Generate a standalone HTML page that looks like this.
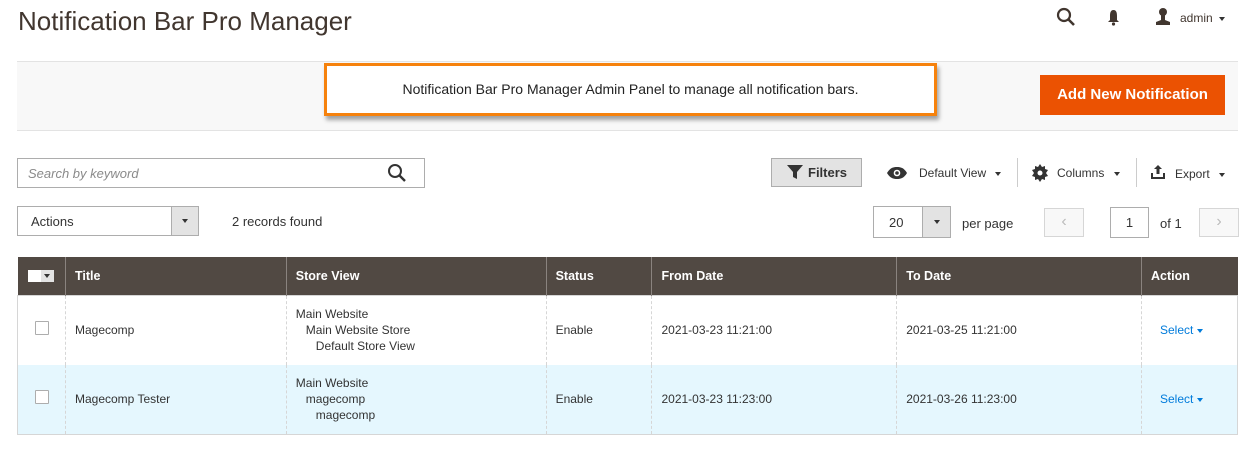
<!DOCTYPE html>
<html><head><style>
*{box-sizing:border-box;margin:0;padding:0}
body{width:1258px;height:464px;background:#fff;font-family:"Liberation Sans",sans-serif;color:#333;position:relative;overflow:hidden;font-size:13px}
.a{position:absolute}
.tri{display:inline-block;width:0;height:0;border-left:3.5px solid transparent;border-right:3.5px solid transparent;border-top:4px solid #333;vertical-align:middle}
table{border-collapse:collapse;position:absolute;left:17px;top:257px;width:1221px;font-size:12px}
th{background:#514943;color:#fff;text-align:left;font-weight:bold;height:38px;padding:0 9px;border-left:1px solid #8a837f;font-size:12.5px}
th:first-child{border-left:none}
td{padding:0 9px;border-left:1px dashed #d6d6d6;vertical-align:middle;line-height:16px}
td:first-child{border-left:none}
tbody tr{height:69px}
tbody tr:first-child{height:70px}
tr.alt td{background:#e5f7fe}
tbody{border:1px solid #d6d6d6}
.cb{width:14px;height:14px;border:1px solid #adadad;background:#fff;display:inline-block;margin-left:8px;border-radius:1px}
.sel{color:#007bdb}
</style></head><body>
<div class="a" style="left:18px;top:6px;font-size:26px;color:#41362f">Notification Bar Pro Manager</div>
<svg class="a" style="left:1056px;top:7px" width="20" height="20" viewBox="0 0 20 20"><circle cx="8" cy="8" r="6" fill="none" stroke="#41362f" stroke-width="2.2"/><path d="M12.5 12.5L18 18" stroke="#41362f" stroke-width="2.6"/></svg>
<svg class="a" style="left:1106px;top:9px" width="15" height="17" viewBox="0 0 15 17"><path d="M7.5 1C4.5 1 4 4 4 7v4L2 13h11l-2-2V7c0-3-.5-6-3.5-6z" fill="#41362f"/><circle cx="7.5" cy="15" r="1.6" fill="#41362f"/></svg>
<svg class="a" style="left:1154px;top:7px" width="18" height="18" viewBox="0 0 18 18"><circle cx="9" cy="5" r="4" fill="#41362f"/><path d="M7 8h4v5l5 2v3H2v-3l5-2z" fill="#41362f"/></svg>
<div class="a" style="left:1180px;top:11px;font-size:12px;color:#41362f">admin <span class="tri" style="margin-left:3px"></span></div>

<div class="a" style="left:17px;top:61px;width:1221px;height:70px;background:#f8f8f8;border-top:1px solid #e3e3e3;border-bottom:1px solid #e3e3e3"></div>
<div class="a" style="left:324px;top:63px;width:613px;height:53px;background:#fff;border:3px solid #f6820d;box-shadow:2px 4px 4px rgba(0,0,0,.35);text-align:center;line-height:47px;font-size:14px;color:#222">Notification Bar Pro Manager Admin Panel to manage all notification bars.</div>
<div class="a" style="left:1040px;top:75px;width:185px;height:40px;background:#eb5202;color:#fff;font-weight:bold;font-size:15px;text-align:center;line-height:40px">Add New Notification</div>

<div class="a" style="left:17px;top:158px;width:408px;height:30px;border:1px solid #adadad;font-style:italic;color:#8a8a8a;font-size:13px;padding:7px 10px">Search by keyword</div>
<svg class="a" style="left:387px;top:163px" width="20" height="20" viewBox="0 0 20 20"><circle cx="8" cy="8" r="6" fill="none" stroke="#333" stroke-width="2"/><path d="M12.5 12.5L18 18" stroke="#333" stroke-width="2.4"/></svg>

<div class="a" style="left:771px;top:158px;width:91px;height:29px;background:#e3e3e3;border:1px solid #adadad;font-weight:bold;font-size:13px;line-height:27px;padding-left:36px;color:#333">Filters</div>
<svg class="a" style="left:787px;top:165px" width="16" height="14" viewBox="0 0 16 14"><path d="M0 0h16L10 7v7L6 12V7z" fill="#333"/></svg>
<svg class="a" style="left:886px;top:166px" width="22" height="14" viewBox="0 0 22 14"><path d="M1 7C4 2 7 1 11 1s7 1 10 6c-3 5-6 6-10 6S4 12 1 7z" fill="#333"/><circle cx="11" cy="7" r="3.3" fill="#fff"/><circle cx="11" cy="7" r="1.8" fill="#333"/></svg>
<div class="a" style="left:919px;top:166px;font-size:12px">Default View <span class="tri" style="margin-left:6px"></span></div>
<div class="a" style="left:1017px;top:158px;width:1px;height:29px;background:#ccc"></div>
<svg class="a" style="left:1031px;top:164px" width="18" height="18" viewBox="0 0 18 18"><path d="M9 0l2 3 3-1 0 3 3 1-2 3 2 3-3 1 0 3-3-1-2 3-2-3-3 1 0-3-3-1 2-3-2-3 3-1 0-3 3 1z" fill="#333"/><circle cx="9" cy="9" r="2.5" fill="#fff"/></svg>
<div class="a" style="left:1057px;top:166px;font-size:12px">Columns <span class="tri" style="margin-left:6px"></span></div>
<div class="a" style="left:1136px;top:158px;width:1px;height:29px;background:#ccc"></div>
<svg class="a" style="left:1150px;top:165px" width="16" height="15" viewBox="0 0 16 15"><path d="M8 0l4 4H9.5v5h-3V4H4z" fill="#333"/><path d="M1 8v6h14V8h-2v4H3V8z" fill="#333"/></svg>
<div class="a" style="left:1175px;top:167px;font-size:12px">Export <span class="tri" style="margin-left:6px"></span></div>

<div class="a" style="left:17px;top:206px;width:182px;height:30px;border:1px solid #adadad;padding:7px 13px;font-size:13px">Actions</div>
<div class="a" style="left:171px;top:206px;width:28px;height:30px;background:#e3e3e3;border:1px solid #adadad;text-align:center;line-height:26px"><span class="tri"></span></div>
<div class="a" style="left:232px;top:214px;font-size:13px">2 records found</div>

<div class="a" style="left:873px;top:206px;width:78px;height:32px;border:1px solid #adadad;padding:8px 15px;font-size:13px">20</div>
<div class="a" style="left:922px;top:206px;width:29px;height:32px;background:#e3e3e3;border:1px solid #adadad;text-align:center;line-height:28px"><span class="tri"></span></div>
<div class="a" style="left:962px;top:216px;font-size:13px">per page</div>
<div class="a" style="left:1044px;top:208px;width:40px;height:29px;background:#f8f8f8;border:1px solid #d6d6d6;text-align:center;line-height:26px;color:#bbb;font-size:16px">‹</div>
<div class="a" style="left:1110px;top:207px;width:39px;height:31px;border:1px solid #adadad;text-align:center;line-height:29px;font-size:13px">1</div>
<div class="a" style="left:1160px;top:216px;font-size:13px">of 1</div>
<div class="a" style="left:1199px;top:208px;width:40px;height:29px;background:#f8f8f8;border:1px solid #d6d6d6;text-align:center;line-height:26px;color:#bbb;font-size:16px">›</div>

<table>
<colgroup><col style="width:48px"><col style="width:221px"><col style="width:260px"><col style="width:106px"><col style="width:245px"><col style="width:245px"><col style="width:96px"></colgroup>
<thead><tr><th style="padding:0 0 0 10px"><span style="display:inline-block;width:13px;height:12px;background:#fff;vertical-align:middle"></span><span style="display:inline-block;width:13px;height:12px;background:#e3e3e3;vertical-align:middle;text-align:center;line-height:10px"><span class="tri" style="border-top-color:#333"></span></span></th><th>Title</th><th>Store View</th><th>Status</th><th>From Date</th><th>To Date</th><th>Action</th></tr></thead>
<tbody>
<tr><td><span class="cb"></span></td><td>Magecomp</td><td>Main Website<br>&nbsp;&nbsp;&nbsp;Main Website Store<br>&nbsp;&nbsp;&nbsp;&nbsp;&nbsp;&nbsp;Default Store View</td><td>Enable</td><td>2021-03-23 11:21:00</td><td>2021-03-25 11:21:00</td><td style="padding-left:18px"><span class="sel">Select <span class="tri" style="border-top-color:#007bdb"></span></span></td></tr>
<tr class="alt"><td><span class="cb"></span></td><td>Magecomp Tester</td><td>Main Website<br>&nbsp;&nbsp;&nbsp;magecomp<br>&nbsp;&nbsp;&nbsp;&nbsp;&nbsp;&nbsp;magecomp</td><td>Enable</td><td>2021-03-23 11:23:00</td><td>2021-03-26 11:23:00</td><td style="padding-left:18px"><span class="sel">Select <span class="tri" style="border-top-color:#007bdb"></span></span></td></tr>
</tbody></table>
</body></html>
